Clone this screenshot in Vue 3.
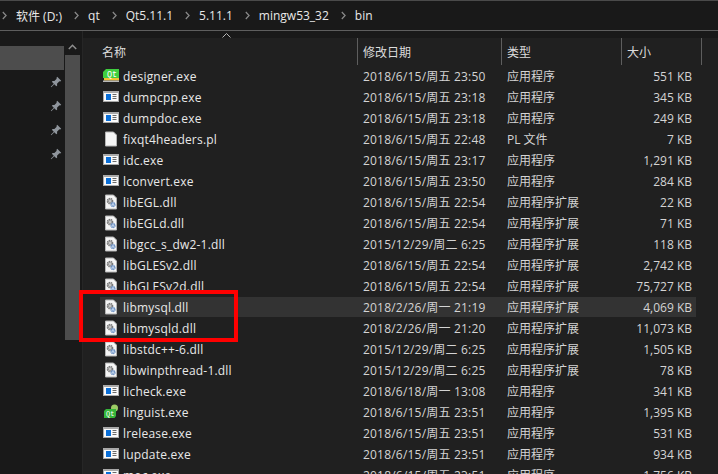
<script setup>
const crumbs = ['软件 (D:)', 'qt', 'Qt5.11.1', '5.11.1', 'mingw53_32', 'bin']
const APP = '应用程序'
const EXT = '应用程序扩展'
const rows = [
  ['designer.exe', '2018/6/15/周五 23:50', APP, '551 KB', 'qt'],
  ['dumpcpp.exe', '2018/6/15/周五 23:18', APP, '345 KB', 'exe'],
  ['dumpdoc.exe', '2018/6/15/周五 23:18', APP, '249 KB', 'exe'],
  ['fixqt4headers.pl', '2018/6/15/周五 22:48', 'PL 文件', '7 KB', 'file'],
  ['idc.exe', '2018/6/15/周五 23:17', APP, '1,291 KB', 'exe'],
  ['lconvert.exe', '2018/6/15/周五 23:50', APP, '284 KB', 'exe'],
  ['libEGL.dll', '2018/6/15/周五 22:54', EXT, '22 KB', 'dll'],
  ['libEGLd.dll', '2018/6/15/周五 22:54', EXT, '71 KB', 'dll'],
  ['libgcc_s_dw2-1.dll', '2015/12/29/周二 6:25', EXT, '118 KB', 'dll'],
  ['libGLESv2.dll', '2018/6/15/周五 22:54', EXT, '2,742 KB', 'dll'],
  ['libGLESv2d.dll', '2018/6/15/周五 22:54', EXT, '75,727 KB', 'dll'],
  ['libmysql.dll', '2018/2/26/周一 21:19', EXT, '4,069 KB', 'dll', true],
  ['libmysqld.dll', '2018/2/26/周一 21:20', EXT, '11,073 KB', 'dll'],
  ['libstdc++-6.dll', '2015/12/29/周二 6:25', EXT, '1,505 KB', 'dll'],
  ['libwinpthread-1.dll', '2015/12/29/周二 6:25', EXT, '78 KB', 'dll'],
  ['licheck.exe', '2018/6/18/周一 13:08', APP, '341 KB', 'exe'],
  ['linguist.exe', '2018/6/15/周五 23:51', APP, '1,395 KB', 'ling'],
  ['lrelease.exe', '2018/6/15/周五 23:51', APP, '531 KB', 'exe'],
  ['lupdate.exe', '2018/6/15/周五 23:51', APP, '934 KB', 'exe'],
  ['moc.exe', '2018/6/15/周五 23:51', APP, '1,756 KB', 'exe'],
].map(([name, date, type, size, icon, hover]) => ({ name, date, type, size, icon, hover }))
const pins = [0, 1, 2, 3]
</script>

<template>
  <div class="window">
    <header class="crumbbar">
      <template v-for="c in crumbs" :key="c">
        <svg class="chev" width="5" height="9" viewBox="0 0 5 9"><path d="M.8 1l3.300 3.500L.8 8" fill="none" stroke="#8a8a8a" stroke-width="1.200"/></svg>
        <span class="crumb">{{ c }}</span>
      </template>
    </header>
    <div class="body">
      <aside class="nav">
        <div class="nav-sel"></div>
        <div class="pins">
          <svg v-for="p in pins" :key="p" width="12" height="12" viewBox="0 0 12 12"><path d="M7.200.8l4 4-1 .8-.8-.3-2.400 2.400.2 1.700-.9.9-2-2-3 3-.5-.5 3-3-2-2 .9-.9 1.700.2L6.700 2.700l-.3-.8z" fill="#8f959c"/></svg>
        </div>
      </aside>
      <div class="track">
        <div class="track-arrow"><svg width="9" height="6" viewBox="0 0 9 6"><path d="M.8 5L4.500 1.300 8.200 5" fill="none" stroke="#8e8e8e" stroke-width="1.500"/></svg></div>
        <div class="thumb"></div>
      </div>
      <main class="list">
        <div class="head">
          <svg class="sort" width="9" height="5" viewBox="0 0 9 5"><path d="M.5 4.500l4-4 4 4" fill="none" stroke="#b5b5b5"/></svg>
          <div class="cell c-name">名称</div>
          <div class="cell c-date sep">修改日期</div>
          <div class="cell c-type sep">类型</div>
          <div class="cell c-size sep">大小</div>
          <div class="sep-end"></div>
        </div>
        <div v-for="r in rows" :key="r.name" class="row" :class="{ hover: r.hover }">
          <span class="c-name name">
            <svg class="ico" width="16" height="16" viewBox="0 0 16 16">
              <template v-if="r.icon === 'exe'">
                <rect x="0" y="2" width="16" height="11" fill="#a9a9a9"/>
                <rect x="1" y="4" width="14" height="8" fill="#fafafa"/>
                <rect x="3" y="5" width="5" height="6" fill="#0a6fd8"/>
                <path d="M9.500 5.500h4M9.500 7.500h4M9.500 9.500h4" stroke="#6a6a6a"/>
              </template>
              <template v-else-if="r.icon === 'qt'">
                <path d="M3 1h13v9H0V4z" fill="#3fcf3f"/>
                <rect x="1" y="10" width="15" height="2.500" fill="#f1c232"/>
                <rect x="0" y="12.500" width="16" height="1.500" fill="#b9b9b9"/>
                <text x="4" y="8.500" font-size="8.500" font-family="Liberation Mono, monospace" fill="#fff">Qt</text>
              </template>
              <template v-else-if="r.icon === 'ling'">
                <circle cx="11.500" cy="4" r="3.500" fill="#9ccc65"/>
                <path d="M3 5h10v7l-1.500 2H1V7z" fill="#35b53a"/>
                <text x="3" y="12" font-size="7" font-family="Liberation Mono, monospace" fill="#fff">Qt</text>
              </template>
              <template v-else>
                <path d="M2.500 2.500h8l3 3v11h-11z" fill="#f5f5f5" stroke="#b4b4b4" transform="translate(0 -1.500)"/>
                <template v-if="r.icon === 'dll'">
                  <circle cx="7" cy="7" r="2.400" fill="#c4c4c4" stroke="#787878" stroke-width="1.800" stroke-dasharray="1.200 .6"/>
                  <circle cx="10" cy="10.500" r="1.900" fill="#b9cde8" stroke="#5f86bd" stroke-width="1.500" stroke-dasharray="1 .5"/>
                </template>
              </template>
            </svg>
            <span class="label">{{ r.name }}</span>
          </span>
          <span class="c-date val spaced">{{ r.date }}</span>
          <span class="c-type val">{{ r.type }}</span>
          <span class="c-size val size">{{ r.size }}</span>
        </div>
      </main>
    </div>
    <div class="callout"></div>
  </div>
</template>

<style>
html, body { margin: 0; background: #191919; overflow: hidden; }
</style>

<style scoped>
.window {
  width: 718px; height: 474px; overflow: hidden; background: #191919; color: #e6e6e6;
  font-family: "Open Sans", "Noto Sans CJK SC", sans-serif;
  font-size: 12px; display: flex; flex-direction: column; position: relative;
}
.crumbbar {
  height: 29px; flex: none; display: flex; align-items: center; gap: 9px; padding-left: 2px;
  border-top: 1px solid #4a4a4a; border-bottom: 1px solid #5e5e5e;
  font-size: 12px; color: #e8e8e8;
}
.crumb { margin-right: 3px; }
.body { flex: 1; display: flex; min-height: 0; }
.nav { width: 65px; flex: none; padding-top: 15px; }
.nav-sel { height: 24px; background: #4d4d4d; margin-right: 1px; }
.pins { display: flex; flex-direction: column; gap: 12px; align-items: flex-end; padding: 6px 3px 0 0; }
.track { width: 15px; flex: none; display: flex; flex-direction: column; }
.track-arrow { height: 24px; display: flex; justify-content: center; padding-top: 13px; box-sizing: border-box; }
.thumb { height: 285px; background: #4d4d4d; }
.list { flex: 1; background: #202020; position: relative; margin-left: 2px; border-left: 1px solid #262626; padding-top: 7px; background-clip: padding-box; }
.head {
  display: flex; position: relative; padding-left: 19px; margin-top: -7px; padding-top: 7px;
  height: 35px; box-sizing: border-box; background: linear-gradient(#191919 7px, #202020 7px);
}
.sort { position: absolute; left: 139px; top: 2px; }
.cell { color: #dcdcdc; display: flex; align-items: center; height: 27px; box-sizing: border-box; }
.sep { border-left: 1px solid #5e5e5e; padding-left: 5px; }
.sep-end { border-left: 1px solid #5e5e5e; height: 27px; }
.c-name { width: 255px; flex: none; }
.c-date { width: 144px; flex: none; }
.c-type { width: 120px; flex: none; }
.c-size { width: 80px; flex: none; }
.row { height: 20px; margin: 0 0 1px 17px; width: 596px; display: flex; align-items: center; white-space: nowrap; box-sizing: border-box; padding-left: 2px; }
.row.hover { background: #333; }
.name { display: flex; align-items: center; gap: 4px; margin-left: 1px; width: 254px; color: #e8e8e8; }
.label { letter-spacing: .2px; }
.ico { flex: none; }
.val { color: #d4d4d4; padding-left: 6px; box-sizing: border-box; }
.spaced { letter-spacing: .2px; }
.size { text-align: right; padding-right: 9px; }
.callout { position: absolute; left: 79px; top: 290px; width: 159px; height: 52px; border: 4px solid #f00; box-sizing: border-box; pointer-events: none; }
</style>
